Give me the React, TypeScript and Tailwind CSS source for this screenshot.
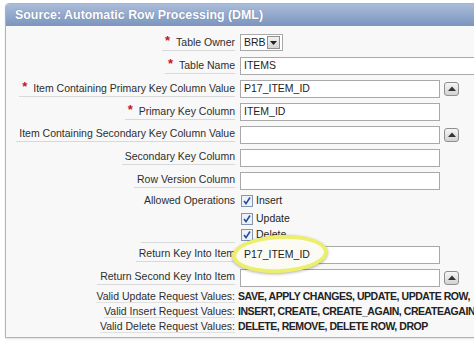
import React from "react";

const Star = () => (
  <span className="inline-block text-[13px] font-bold leading-none text-[#c0161e] mr-[6px] relative top-[-1px]">*</span>
);

const Label = ({ text, req }: { text: string; req?: boolean }) => (
  <span className="inline-block border-b border-[#d9d9d9] leading-[13px] pb-[1px] pl-[3px] text-[#2e2e2e] whitespace-nowrap">
    {req && <Star />}
    {text}
  </span>
);

const UpBtn = () => (
  <div className="ml-[4px] w-[15px] h-[14px] rounded-[3px] border border-[#8f8f8f] bg-gradient-to-b from-[#f6f6f6] to-[#d2d2d2] flex items-center justify-center">
    <svg width="8" height="5" viewBox="0 0 8 5"><path d="M0 5 L4 0.5 L8 5 Z" fill="#333" /></svg>
  </div>
);

const Input = ({ value, w = "w-[200px]", hi }: { value?: string; w?: string; hi?: boolean }) => (
  <div className={`${w} h-[18px] border border-[#a9a9a9] bg-white flex items-center pl-[3px] text-[#1e1e1e] whitespace-nowrap`}>
    {value && <span className={hi ? "relative z-20" : ""}>{value}</span>}
  </div>
);

const Row = ({ h, children, label, req }: { h: string; children?: React.ReactNode; label: string; req?: boolean }) => (
  <div className={`flex items-center ${h}`}>
    <div className="w-[229px] flex justify-end shrink-0">
      <Label text={label} req={req} />
    </div>
    <div className="ml-[5px] flex items-center">{children}</div>
  </div>
);

const Check = ({ label, h }: { label: string; h: string }) => (
  <div className={`flex items-center ${h}`}>
    <svg width="12" height="12" viewBox="0 0 12 12" className="ml-[1px] mr-[3px]">
      <rect x="0.5" y="0.5" width="11" height="11" fill="#eef1f6" stroke="#8595ad" />
      <path d="M3 6 L5 8.6 L9 2.5" fill="none" stroke="#1f4fa8" strokeWidth="1.6" />
    </svg>
    <span className="text-[#1e1e1e]">{label}</span>
  </div>
);

const Valid = ({ label, value }: { label: string; value: string }) => (
  <div className="flex items-center h-[15px]">
    <div className="w-[229px] flex justify-end shrink-0">
      <span className="inline-block border-b border-[#e0e0e0] leading-[12px] text-[#2e2e2e] whitespace-nowrap">{label}</span>
    </div>
    <div className="ml-[3px] font-bold text-[#222] whitespace-nowrap tracking-[-0.45px]">{value}</div>
  </div>
);

export default function App() {
  return (
    <div className="w-[474px] h-[345px] bg-white overflow-hidden pt-[3px] pl-[5px] font-['Liberation_Sans',Arial,sans-serif] text-[10.5px]">
      <div className="relative w-[490px] border border-[#aeb4bd] rounded-tl-[4px] bg-[#f8f8f8] shadow-[0_1px_2px_rgba(0,0,0,0.12)]">
        <div className="h-[22px] bg-gradient-to-b from-[#aabcd9] to-[#7c95be] rounded-tl-[3px] pl-[9px] flex items-center text-white font-bold text-[12.4px] [text-shadow:0_0_1px_rgba(60,80,120,0.5)]">
          Source: Automatic Row Processing (DML)
        </div>
        <div className="pt-[5px] pb-[3px]">
          <Row h="h-[23px]" label="Table Owner" req>
            <div className="w-[43px] h-[17px] border border-[#a9a9a9] bg-white flex items-center justify-between pl-[3px] pr-[2px] text-[#1e1e1e]">
              <span>BRB</span>
              <div className="w-[13px] h-[13px] border border-[#8f8f8f] bg-gradient-to-b from-[#f2f2f2] to-[#d4d4d4] flex items-center justify-center">
                <svg width="7" height="4" viewBox="0 0 7 4"><path d="M0 0 L7 0 L3.5 4 Z" fill="#222" /></svg>
              </div>
            </div>
          </Row>
          <Row h="h-[23px]" label="Table Name" req>
            <Input value="ITEMS" w="w-[250px]" />
          </Row>
          <Row h="h-[23px]" label="Item Containing Primary Key Column Value" req>
            <Input value="P17_ITEM_ID" />
            <UpBtn />
          </Row>
          <Row h="h-[23px]" label="Primary Key Column" req>
            <Input value="ITEM_ID" />
          </Row>
          <Row h="h-[23px]" label="Item Containing Secondary Key Column Value">
            <Input />
            <UpBtn />
          </Row>
          <Row h="h-[23px]" label="Secondary Key Column">
            <Input />
          </Row>
          <Row h="h-[23px]" label="Row Version Column">
            <Input />
          </Row>
          <div className="flex">
            <div className="w-[229px] flex justify-end shrink-0 pt-[2px]">
              <Label text="Allowed Operations" />
            </div>
            <div className="ml-[5px] flex flex-col">
              <Check label="Insert" h="h-[18px]" />
              <Check label="Update" h="h-[17px]" />
              <Check label="Delete" h="h-[16px]" />
            </div>
          </div>
          <Row h="h-[23px]" label="Return Key Into Item">
            <Input value="P17_ITEM_ID" hi />
          </Row>
          <Row h="h-[23px]" label="Return Second Key Into Item">
            <Input />
            <UpBtn />
          </Row>
          <Valid label="Valid Update Request Values:" value="SAVE, APPLY CHANGES, UPDATE, UPDATE ROW," />
          <Valid label="Valid Insert Request Values:" value="INSERT, CREATE, CREATE_AGAIN, CREATEAGAIN" />
          <Valid label="Valid Delete Request Values:" value="DELETE, REMOVE, DELETE ROW, DROP" />
        </div>
        <div className="absolute z-10 left-[226px] top-[231px] w-[96px] h-[38px] rounded-[50%] border-[4px] border-[#ecef6c] bg-[#fbfbf4] rotate-[-3deg] shadow-[0_1px_3px_rgba(0,0,0,0.3)]" />
      </div>
    </div>
  );
}
